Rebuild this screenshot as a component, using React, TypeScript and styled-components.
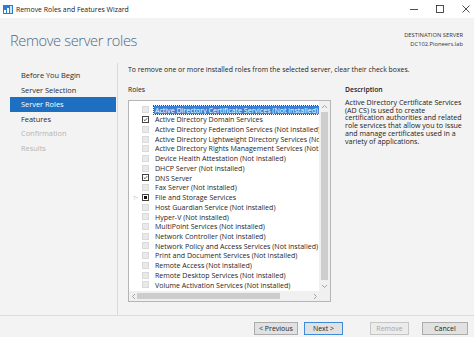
import React from "react";
import styled, { createGlobalStyle } from "styled-components";

type RoleState = "none" | "checked" | "partial";

interface Role {
  name: string;
  state: RoleState;
  expandable?: boolean;
}

const roles: Role[] = [
  { name: "Active Directory Certificate Services (Not installed)", state: "none" },
  { name: "Active Directory Domain Services", state: "checked" },
  { name: "Active Directory Federation Services (Not installed)", state: "none" },
  { name: "Active Directory Lightweight Directory Services (Not installed)", state: "none" },
  { name: "Active Directory Rights Management Services (Not installed)", state: "none" },
  { name: "Device Health Attestation (Not installed)", state: "none" },
  { name: "DHCP Server (Not installed)", state: "none" },
  { name: "DNS Server", state: "checked" },
  { name: "Fax Server (Not installed)", state: "none" },
  { name: "File and Storage Services", state: "partial", expandable: true },
  { name: "Host Guardian Service (Not installed)", state: "none" },
  { name: "Hyper-V (Not installed)", state: "none" },
  { name: "MultiPoint Services (Not installed)", state: "none" },
  { name: "Network Controller (Not installed)", state: "none" },
  { name: "Network Policy and Access Services (Not installed)", state: "none" },
  { name: "Print and Document Services (Not installed)", state: "none" },
  { name: "Remote Access (Not installed)", state: "none" },
  { name: "Remote Desktop Services (Not installed)", state: "none" },
  { name: "Volume Activation Services (Not installed)", state: "none" },
];

const steps = [
  { label: "Before You Begin", active: false, disabled: false },
  { label: "Server Selection", active: false, disabled: false },
  { label: "Server Roles", active: true, disabled: false },
  { label: "Features", active: false, disabled: false },
  { label: "Confirmation", active: false, disabled: true },
  { label: "Results", active: false, disabled: true },
];

const App: React.FC = () => {
  return (
    <>
      <GlobalStyle />
      <Window>
        <TitleBar>
          <AppIcon width="10" height="9" viewBox="0 0 10 9">
            <rect x="0" y="0" width="10" height="9" fill="#2a7fd0" />
            <rect x="1" y="5" width="2" height="3" fill="#fff" />
            <rect x="4" y="3" width="2" height="5" fill="#fff" />
            <rect x="7" y="1" width="2" height="7" fill="#cfe6fb" />
          </AppIcon>
          <TitleText>Remove Roles and Features Wizard</TitleText>
          <Controls>
            <CtrlIcon width="10" height="10" viewBox="0 0 10 10">
              <line x1="1" y1="5.5" x2="9" y2="5.5" stroke="#222" strokeWidth="0.8" />
            </CtrlIcon>
            <CtrlIcon width="10" height="10" viewBox="0 0 10 10">
              <rect x="1.5" y="1.5" width="7" height="7" fill="none" stroke="#222" strokeWidth="0.8" />
            </CtrlIcon>
            <CtrlIcon width="10" height="10" viewBox="0 0 10 10">
              <path d="M1.5 1.5 L8.5 8.5 M8.5 1.5 L1.5 8.5" stroke="#222" strokeWidth="0.8" />
            </CtrlIcon>
          </Controls>
        </TitleBar>

        <Header>
          <PageTitle>Remove server roles</PageTitle>
          <Destination>
            <DestLabel>DESTINATION SERVER</DestLabel>
            <DestName>DC102.Pioneers.lab</DestName>
          </Destination>
        </Header>

        <Body>
          <Nav>
            {steps.map((s) => (
              <NavItem key={s.label} $active={s.active} $disabled={s.disabled}>
                {s.label}
              </NavItem>
            ))}
          </Nav>

          <Content>
            <Intro>
              To remove one or more installed roles from the selected server, clear their check boxes.
            </Intro>
            <Columns>
              <RolesColumn>
                <SectionLabel>Roles</SectionLabel>
                <ListBox>
                  <Rows>
                    {roles.map((r, i) => (
                      <Row key={r.name}>
                        <Expander>{r.expandable ? "▷" : ""}</Expander>
                        <CheckBox $state={r.state}>
                          {r.state === "checked" && (
                            <svg width="7" height="7" viewBox="0 0 7 7">
                              <path d="M1.2 3.6 L2.8 5.2 L5.9 1.6" fill="none" stroke="#111" strokeWidth="1" />
                            </svg>
                          )}
                          {r.state === "partial" && <PartialMark />}
                        </CheckBox>
                        <RoleName $selected={i === 0}>{r.name}</RoleName>
                      </Row>
                    ))}
                  </Rows>
                  <VScroll>
                    <ArrowGlyph>
                      <svg width="7" height="5" viewBox="0 0 7 5">
                        <path d="M1 4 L3.5 1.5 L6 4" fill="none" stroke="#9a9a9a" strokeWidth="0.9" />
                      </svg>
                    </ArrowGlyph>
                    <VThumb />
                    <ArrowGlyph>
                      <svg width="7" height="5" viewBox="0 0 7 5">
                        <path d="M1 1 L3.5 3.5 L6 1" fill="none" stroke="#9a9a9a" strokeWidth="0.9" />
                      </svg>
                    </ArrowGlyph>
                  </VScroll>
                  <HScroll>
                    <ArrowGlyph>
                      <svg width="5" height="7" viewBox="0 0 5 7">
                        <path d="M4 1 L1.5 3.5 L4 6" fill="none" stroke="#9a9a9a" strokeWidth="0.9" />
                      </svg>
                    </ArrowGlyph>
                    <HTrack>
                      <HThumb />
                    </HTrack>
                    <ArrowGlyph>
                      <svg width="5" height="7" viewBox="0 0 5 7">
                        <path d="M1 1 L3.5 3.5 L1 6" fill="none" stroke="#9a9a9a" strokeWidth="0.9" />
                      </svg>
                    </ArrowGlyph>
                  </HScroll>
                  <Corner />
                </ListBox>
              </RolesColumn>
              <DescColumn>
                <SectionLabel $bold>Description</SectionLabel>
                <DescText>
                  Active Directory Certificate Services (AD CS) is used to create certification
                  authorities and related role services that allow you to issue and manage
                  certificates used in a variety of applications.
                </DescText>
              </DescColumn>
            </Columns>
          </Content>
        </Body>

        <Footer>
          <WizButton $width={44}>&lt; Previous</WizButton>
          <WizButton $width={39} $primary>
            Next &gt;
          </WizButton>
          <WizButton $width={39} $disabled $spaced>
            Remove
          </WizButton>
          <WizButton $width={46}>Cancel</WizButton>
        </Footer>
      </Window>
    </>
  );
};

export default App;

const GlobalStyle = createGlobalStyle`
  html, body {
    margin: 0;
    padding: 0;
    background: #f3f3f3;
  }
  body {
    font-family: "Open Sans", "Noto Sans", sans-serif;
    color: #1e1e1e;
  }
`;

const Window = styled.div`
  width: 474px;
  height: 337px;
  display: flex;
  flex-direction: column;
  background: #f3f3f3;
  overflow: hidden;
`;

const TitleBar = styled.div`
  height: 18px;
  flex: none;
  display: flex;
  align-items: center;
  background: #ffffff;
  padding-left: 3px;
`;

const AppIcon = styled.svg`
  flex: none;
`;

const TitleText = styled.span`
  margin-left: 3px;
  font-size: 6.9px;
  color: #1a1a1a;
`;

const Controls = styled.div`
  margin-left: auto;
  display: flex;
  align-items: center;
  gap: 16px;
  padding-right: 3px;
`;

const CtrlIcon = styled.svg`
  display: block;
`;

const Header = styled.div`
  height: 45px;
  flex: none;
  display: flex;
  justify-content: space-between;
  align-items: flex-start;
  padding: 0 11px 0 10px;
`;

const PageTitle = styled.div`
  margin-top: 11px;
  font-size: 14.6px;
  letter-spacing: -0.35px;
  font-weight: 300;
  color: #4e6884;
  line-height: 22px;
`;

const Destination = styled.div`
  margin-top: 13px;
  display: flex;
  flex-direction: column;
  align-items: flex-end;
  line-height: 8.5px;
`;

const DestLabel = styled.span`
  font-size: 5.8px;
  color: #333;
`;

const DestName = styled.span`
  font-size: 5.8px;
  color: #333;
`;

const Body = styled.div`
  flex: 1;
  display: flex;
  min-height: 0;
`;

const Nav = styled.div`
  width: 106px;
  flex: none;
  padding: 5px 1px 0 10px;
  border-right: 1px solid #d9d9d9;
  display: flex;
  flex-direction: column;
`;

const NavItem = styled.div<{ $active: boolean; $disabled: boolean }>`
  height: 14.6px;
  line-height: 14.6px;
  padding-left: 11px;
  font-size: 7.4px;
  white-space: nowrap;
  background: ${({ $active }) => ($active ? "#1e6fc2" : "transparent")};
  color: ${({ $active, $disabled }) =>
    $active ? "#ffffff" : $disabled ? "#b4b4b4" : "#2a2a2a"};
`;

const Content = styled.div`
  flex: 1;
  padding: 2px 0 0 10px;
  display: flex;
  flex-direction: column;
  min-width: 0;
`;

const Intro = styled.div`
  font-size: 6.9px;
  line-height: 10px;
  white-space: nowrap;
  color: #222;
`;

const Columns = styled.div`
  margin-top: 10px;
  display: flex;
  gap: 14px;
`;

const RolesColumn = styled.div`
  width: 203px;
  flex: none;
  display: flex;
  flex-direction: column;
`;

const DescColumn = styled.div`
  width: 121px;
  flex: none;
  display: flex;
  flex-direction: column;
`;

const SectionLabel = styled.div<{ $bold?: boolean }>`
  font-size: 6.8px;
  line-height: 9px;
  font-weight: ${({ $bold }) => ($bold ? 600 : 400)};
  color: #222;
`;

const DescText = styled.p`
  margin: 5px 0 0;
  font-size: 7.1px;
  line-height: 7.7px;
  color: #222;
`;

const ListBox = styled.div`
  margin-top: 6px;
  height: 200px;
  border: 1px solid #b5b5b5;
  background: #ffffff;
  display: grid;
  grid-template-columns: 1fr 11px;
  grid-template-rows: 1fr 10px;
  overflow: hidden;
`;

const Rows = styled.div`
  padding-top: 4px;
  overflow: hidden;
  min-width: 0;
`;

const Row = styled.div`
  height: 9.72px;
  display: flex;
  align-items: center;
  white-space: nowrap;
`;

const Expander = styled.span`
  width: 13px;
  flex: none;
  font-size: 5px;
  color: #9a9a9a;
  text-align: center;
`;

const CheckBox = styled.span<{ $state: RoleState }>`
  width: 7px;
  height: 7px;
  flex: none;
  box-sizing: border-box;
  display: flex;
  align-items: center;
  justify-content: center;
  border: 1px solid ${({ $state }) => ($state === "none" ? "#dadada" : "#444")};
  background: ${({ $state }) => ($state === "none" ? "#e9e9e9" : "#ffffff")};
  svg {
    display: block;
  }
`;

const PartialMark = styled.span`
  width: 3px;
  height: 3px;
  background: #111;
`;

const RoleName = styled.span<{ $selected: boolean }>`
  margin-left: 5px;
  padding: 0 1px;
  font-size: 7.05px;
  line-height: 8.5px;
  color: ${({ $selected }) => ($selected ? "#ffffff" : "#1e1e1e")};
  background: ${({ $selected }) => ($selected ? "#3b82d6" : "transparent")};
  outline: ${({ $selected }) => ($selected ? "1px dotted #1b4f8c" : "none")};
`;

const VScroll = styled.div`
  background: #f0f0f0;
  display: flex;
  flex-direction: column;
`;

const ArrowGlyph = styled.div`
  flex: none;
  width: 11px;
  height: 10px;
  display: flex;
  align-items: center;
  justify-content: center;
`;

const VThumb = styled.div`
  flex: 1;
  margin: 1px 2px;
  background: #cdcdcd;
`;

const HScroll = styled.div`
  background: #f0f0f0;
  display: flex;
  align-items: stretch;
  ${ArrowGlyph} {
    width: 8px;
    height: 10px;
  }
`;

const HTrack = styled.div`
  flex: 1;
  display: flex;
  align-items: stretch;
  padding: 2px 0;
`;

const HThumb = styled.div`
  width: 143px;
  background: #cdcdcd;
`;

const Corner = styled.div`
  background: #f0f0f0;
`;

const Footer = styled.div`
  height: 22px;
  flex: none;
  border-top: 1px solid #dcdcdc;
  box-sizing: border-box;
  display: flex;
  justify-content: flex-end;
  align-items: flex-start;
  padding: 6px 6px 0 0;
  gap: 13px;
  & > :first-child {
    margin-right: -7px;
  }
`;

const WizButton = styled.div<{
  $width: number;
  $primary?: boolean;
  $disabled?: boolean;
  $spaced?: boolean;
}>`
  width: ${({ $width }) => $width}px;
  height: 13px;
  box-sizing: border-box;
  margin-left: ${({ $spaced }) => ($spaced ? "14px" : "0")};
  display: flex;
  align-items: center;
  justify-content: center;
  font-size: 7px;
  background: ${({ $disabled }) => ($disabled ? "#ececec" : "#e1e1e1")};
  border: 1px solid
    ${({ $primary, $disabled }) =>
      $primary ? "#3c8ad8" : $disabled ? "#c6c6c6" : "#adadad"};
  color: ${({ $disabled }) => ($disabled ? "#a6a6a6" : "#1e1e1e")};
`;
